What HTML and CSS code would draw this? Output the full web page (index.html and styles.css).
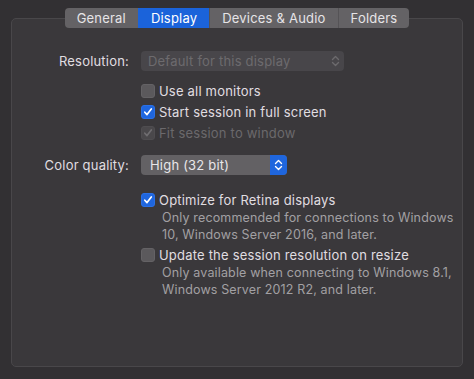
FILE: index.html
```html
<!DOCTYPE html>
<html lang="en">
<head>
  <meta charset="UTF-8" />
  <title>Display</title>
  <link rel="stylesheet" href="styles.css">
</head>
<body>
  <div class="tabs">
    <div class="tab">General</div>
    <div class="tab active">Display</div>
    <div class="tab">Devices &amp; Audio</div>
    <div class="tab">Folders</div>
  </div>

  <div class="box">
    <div class="form">
      <div class="label">Resolution:</div>
      <div class="popup disabled">
        <span>Default for this display</span>
        <svg class="arrows" width="9" height="12" viewBox="0 0 9 12"><path d="M1.5 4.5 L4.5 1.5 L7.5 4.5 M1.5 7.5 L4.5 10.5 L7.5 7.5" fill="none" stroke="#6c6a6d" stroke-width="1.4" stroke-linecap="round" stroke-linejoin="round"/></svg>
      </div>

      <div></div>
      <div class="checks">
        <div class="check"><span class="box-icon"></span>Use all monitors</div>
        <div class="check"><span class="box-icon on"><svg width="10" height="10" viewBox="0 0 10 10"><path d="M1.8 5.2 L4 7.6 L8.3 2" fill="none" stroke="#fff" stroke-width="1.7" stroke-linecap="round" stroke-linejoin="round"/></svg></span>Start session in full screen</div>
        <div class="check off"><span class="box-icon dim"><svg width="10" height="10" viewBox="0 0 10 10"><path d="M1.8 5.2 L4 7.6 L8.3 2" fill="none" stroke="#6f6d70" stroke-width="1.7" stroke-linecap="round" stroke-linejoin="round"/></svg></span>Fit session to window</div>
      </div>

      <div class="label quality">Color quality:</div>
      <div class="popup quality">
        <span>High (32 bit)</span>
        <span class="stepper"><svg width="9" height="12" viewBox="0 0 9 12"><path d="M1.5 4.5 L4.5 1.5 L7.5 4.5 M1.5 7.5 L4.5 10.5 L7.5 7.5" fill="none" stroke="#fff" stroke-width="1.4" stroke-linecap="round" stroke-linejoin="round"/></svg></span>
      </div>

      <div></div>
      <div class="options">
        <div class="option">
          <div class="check"><span class="box-icon on"><svg width="10" height="10" viewBox="0 0 10 10"><path d="M1.8 5.2 L4 7.6 L8.3 2" fill="none" stroke="#fff" stroke-width="1.7" stroke-linecap="round" stroke-linejoin="round"/></svg></span>Optimize for Retina displays</div>
          <p class="note">Only recommended for connections to Windows<br>10, Windows Server 2016, and later.</p>
        </div>
        <div class="option">
          <div class="check"><span class="box-icon"></span>Update the session resolution on resize</div>
          <p class="note">Only available when connecting to Windows 8.1,<br>Windows Server 2012 R2, and later.</p>
        </div>
      </div>
    </div>
  </div>
</body>
</html>
```

FILE: styles.css
```css
* { margin: 0; padding: 0; box-sizing: border-box; }
body {
  background-color: #323033;
  color: #e0dee1;
  font-family: 'Inter', 'Liberation Sans', sans-serif;
  font-size: 13px;
  letter-spacing: 0.2px;
  padding: 8px 11px 0;
}
.tabs {
  position: relative;
  z-index: 1;
  display: flex;
  justify-content: center;
}
.tab {
  height: 20px;
  line-height: 20px;
  padding: 0 12px;
  background: #646265;
  color: #e6e4e7;
  border-left: 1px solid #555356;
}
.tab:first-child { border-left: none; border-radius: 4px 0 0 4px; padding-left: 12px; }
.tab:last-child { border-radius: 0 4px 4px 0; padding-right: 12px; }
.tab.active {
  background: #1b63da;
  color: #fff;
  border-left-color: #1b63da;
}
.box {
  margin-top: -10px;
  height: 349px;
  border: 1px solid #49474a;
  border-radius: 5px;
  background: #3a383b;
  padding-top: 32px;
}
.form {
  display: grid;
  grid-template-columns: 117px 1fr;
  column-gap: 12px;
  align-items: start;
}
.label {
  text-align: right;
  line-height: 20px;
}
.popup {
  display: flex;
  align-items: center;
  justify-content: space-between;
  height: 20px;
  border-radius: 4px;
  padding-left: 7px;
}
.popup.disabled {
  width: 203px;
  background: #48464a;
  color: #6d6b6e;
  padding-right: 4px;
}
.popup.quality {
  width: 146px;
  background: #636164;
  color: #e8e6e9;
  margin-top: 12px;
  padding-left: 9px;
}
.label.quality { margin-top: 12px; }
.stepper {
  display: flex;
  align-items: center;
  justify-content: center;
  width: 17px;
  height: 20px;
  background: #1f66de;
  border-radius: 0 4px 4px 0;
}
.checks {
  margin-top: 9px;
}
.check {
  display: flex;
  align-items: center;
  height: 21px;
}
.check.off { color: #6b696c; }
.box-icon {
  display: inline-flex;
  align-items: center;
  justify-content: center;
  width: 14px;
  height: 14px;
  margin-right: 4px;
  border-radius: 3px;
  background: #5b595c;
  border: 1px solid #646265;
}
.box-icon.on {
  background: #1f66de;
  border-color: #2a70e6;
}
.box-icon.dim {
  background: #4a484b;
  border-color: #4f4d50;
}
.options {
  margin-top: 14px;
  display: flex;
  flex-direction: column;
  gap: 1px;
}
.note {
  margin-left: 21px;
  font-size: 12.5px;
  letter-spacing: 0.15px;
  line-height: 16.5px;
  color: #a2a0a3;
}
```
